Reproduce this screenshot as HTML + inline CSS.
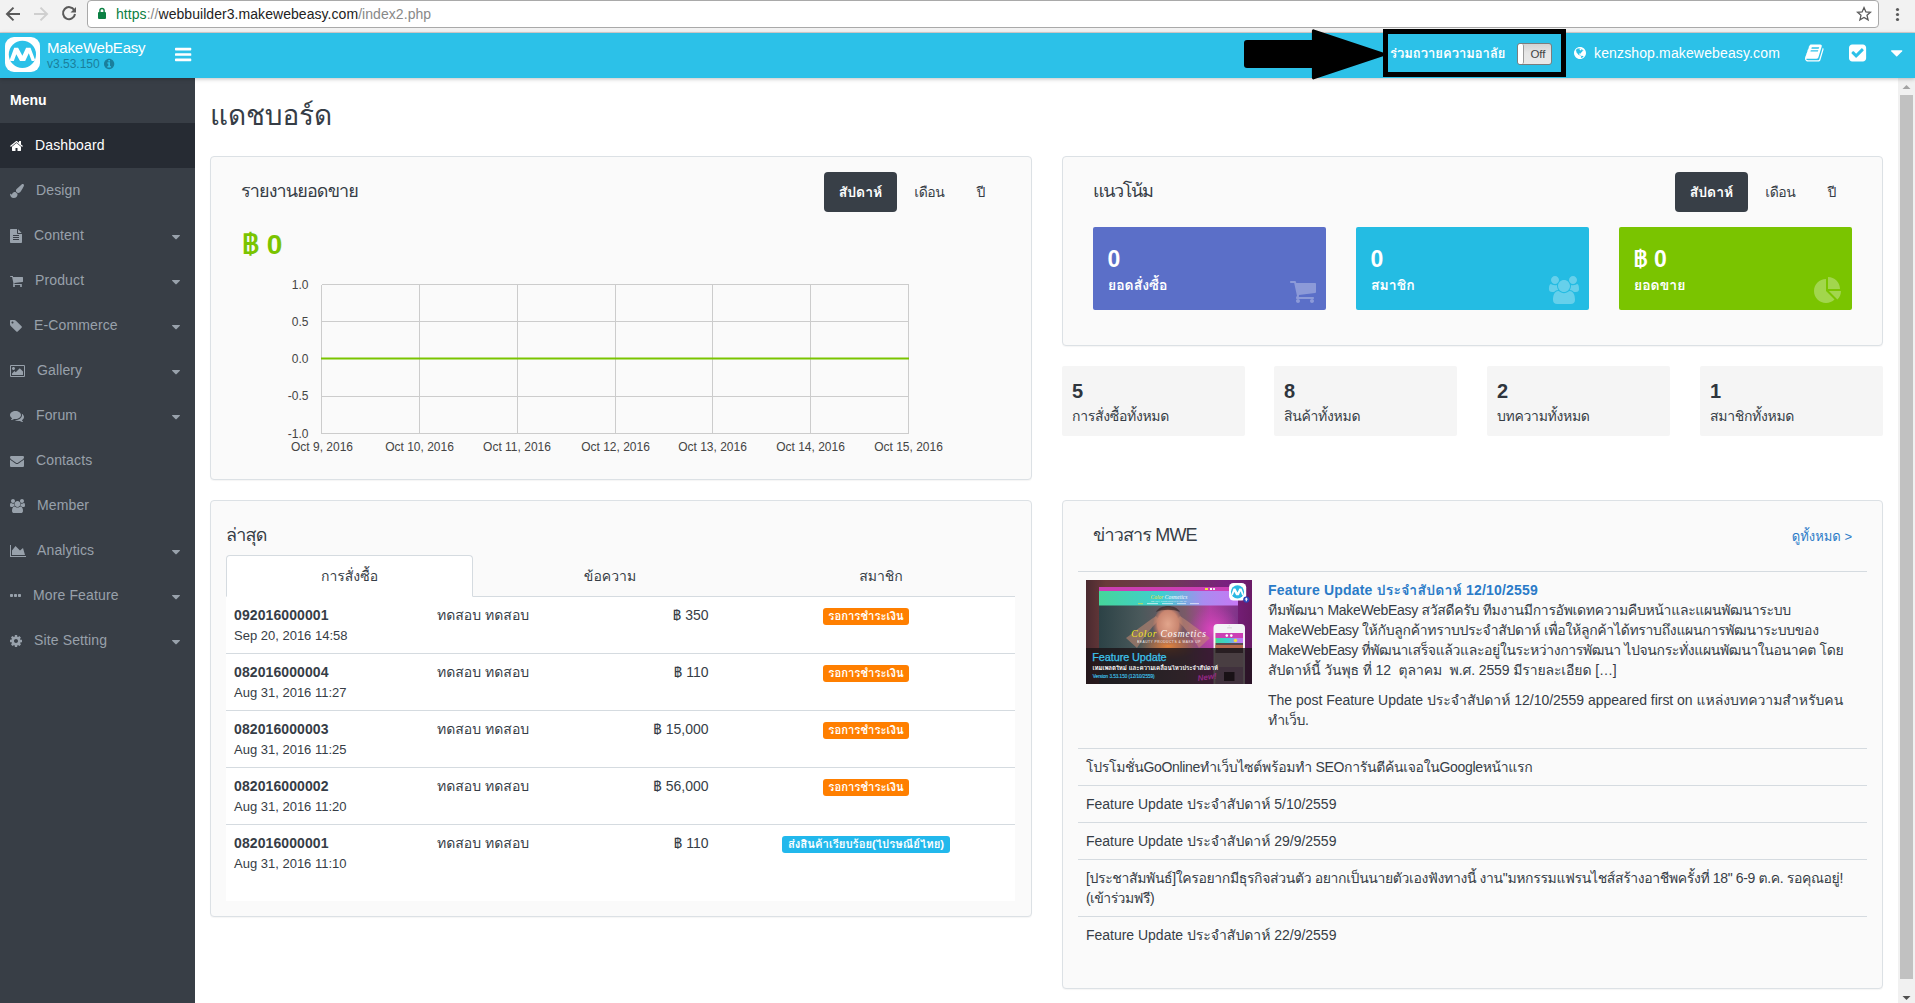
<!DOCTYPE html>
<html lang="th"><head><meta charset="utf-8"><title>MakeWebEasy</title>
<style>
*{box-sizing:border-box}
html,body{margin:0;padding:0}
body{width:1915px;height:1003px;overflow:hidden;position:relative;background:#fff;font-family:"Liberation Sans","Loma","Noto Sans Thai","DejaVu Sans",sans-serif;font-size:14px;line-height:20px;color:#363d46}
.fa{fill:currentColor;display:inline-block;vertical-align:middle;overflow:visible}
.abs{position:absolute}
/* browser chrome */
#chrome{position:absolute;left:0;top:0;width:1915px;height:33px;background:#f2f2f2;border-bottom:1px solid #d9d2d2}
#urlbar{position:absolute;left:87px;top:0;width:1792px;height:28px;background:#fff;border:1px solid #a9a9a9;border-radius:4px}
#url{position:absolute;left:116px;top:4px;font-size:14px;line-height:20px;color:#222;white-space:nowrap;letter-spacing:.055px}
#url .g{color:#0b8043}#url .s{color:#888}
/* header */
#hdr{position:absolute;left:0;top:33px;width:1915px;height:45px;background:#2cc1e8;box-shadow:0 1px 4px rgba(0,0,0,.25);z-index:5;color:#fff}
#logo{position:absolute;left:5px;top:4px;width:35px;height:35px;background:#fff;border-radius:9px}
#brand{position:absolute;left:47px;top:5.5px;font-size:15px;line-height:18px;color:#fff;white-space:nowrap;letter-spacing:-0.2px}
#ver{position:absolute;left:47px;top:24px;font-size:12px;line-height:14px;color:#1a7f9c;white-space:nowrap}
/* sidebar */
#side{position:absolute;left:0;top:78px;width:195px;height:925px;background:#383e46;color:#98a1ab;z-index:2}
#side .mh{height:45px;line-height:44px;padding-left:10px;color:#fff;font-weight:bold;font-size:14px}
#side .it{height:45px;line-height:45px;position:relative;font-size:14px;letter-spacing:.13px;white-space:nowrap}
#side .it.act{background:#262b33;color:#fff}
#side .it .ic{position:absolute;left:10px;top:0;height:45px;display:flex;align-items:center}
#side .it .tx{position:absolute;top:0}
#side .it .cr{position:absolute;left:172px;top:1px;height:45px;display:flex;align-items:center}
/* scrollbar */
#sb{position:absolute;left:1898px;top:78px;width:17px;height:925px;background:#f1f1f1;z-index:1}
#sb .th{position:absolute;left:2px;top:17px;width:13px;height:884px;background:#c1c1c1}
/* content */
h1{letter-spacing:-.15px;position:absolute;left:210px;top:96px;margin:0;font-size:28px;line-height:40px;font-weight:normal;color:#363d46;white-space:nowrap}
.panel{position:absolute;background:#fafafa;border:1px solid #dce1e5;border-radius:4px;box-shadow:0 1px 1px rgba(0,0,0,.04)}
.ptitle{position:absolute;font-size:18px;line-height:26px;white-space:nowrap;color:#363d46}
.btns span{position:absolute;top:15px;height:40px;line-height:40px;text-align:center;font-size:14px;border-radius:4px;color:#363d46;white-space:nowrap}
.btns span.on{background:#383f47;color:#fff;font-weight:bold}
.big{position:absolute;font-weight:bold;white-space:nowrap}
.tile{position:absolute;top:70px;width:233px;height:83px;border-radius:2px;color:#fff}
.tile .n{position:absolute;left:14.5px;top:19px;font-size:23px;line-height:26px;font-weight:bold;white-space:nowrap}
.tile .l{position:absolute;left:15px;top:48px;font-size:14px;line-height:20px;font-weight:bold;white-space:nowrap}
.tile .i{position:absolute;line-height:0;color:rgba(255,255,255,.3)}
.stat{position:absolute;top:366px;width:182.5px;height:70px;background:#f5f5f5;border-radius:2px}
.stat .n{position:absolute;left:10px;top:13px;font-size:20px;line-height:24px;font-weight:bold;color:#2f353d}
.stat .l{position:absolute;left:10px;top:40px;font-size:14px;line-height:20px;white-space:nowrap;letter-spacing:-.31px}
/* tabs + table */
.tab{position:absolute;top:54px;height:42px;line-height:42px;text-align:center;font-size:14px;border-bottom:1px solid #d5dbe0}
.tab.on{line-height:40px;background:#fff;border:1px solid #d5dbe0;border-bottom-color:#fff;border-radius:4px 4px 0 0}
#orders{position:absolute;left:15px;top:96px;width:789px;height:304px;background:#fff}
.row{position:relative;height:57px;border-top:1px solid #d5dbe0}
.row:first-child{border-top:0;height:56px}
.row>*{position:absolute;white-space:nowrap;line-height:20px}
.row .no{left:8px;top:8px;font-weight:bold;letter-spacing:.1px}
.row .dt{left:8px;top:28.5px;font-size:13px}
.row .nm{left:211px;top:8px}
.row .pr{right:306.5px;top:8px}
.row .bd{left:491px;width:298px;top:8px;text-align:center}
.lb{display:inline-block;height:17px;line-height:17px;padding:0 5.5px;border-radius:3px;color:#fff;font-weight:bold;font-size:11.3px;vertical-align:top;margin-top:3px}
.lb.o{background:#ff7f00}.lb.b{background:#22b8ec}
/* news */
.nrow{position:absolute;left:15px;width:789px;border-top:1px solid #d5dbe0;padding:8px;line-height:20px;white-space:nowrap}
a{color:#2a7bc8;text-decoration:none}

</style></head>
<body>
<div id="chrome">
  <svg class="abs" style="left:0;top:0" width="87" height="29" viewBox="0 0 87 29" fill="none" stroke-linecap="butt" stroke-linejoin="miter">
    <path d="M20 14H7.5M13.5 7.6L7 14l6.5 6.4" stroke="#5a5a5a" stroke-width="2"/>
    <path d="M34 14h12.5M40.5 7.6L47 14l-6.5 6.4" stroke="#cfcfcf" stroke-width="2"/>
    <path d="M74.3 10.2A6 6 0 1 0 75 14" stroke="#5a5a5a" stroke-width="2"/>
    <path d="M76 7v5.5h-5.5z" fill="#5a5a5a" stroke="none"/>
  </svg>
  <div id="urlbar"></div>
  <svg class="abs" style="left:97px;top:7px" width="10" height="13" viewBox="0 0 10 13"><rect x="1" y="5" width="8" height="7" rx="1" fill="#0b8043"/><path d="M2.9 5.5V3.6a2.1 2.1 0 0 1 4.2 0v1.9" fill="none" stroke="#0b8043" stroke-width="1.4"/></svg>
  <div id="url"><span class="g">https</span><span class="s">://</span>webbuilder3.makewebeasy.com<span class="s">/index2.php</span></div>
  <svg class="abs" style="left:1856px;top:6px" width="16" height="16" viewBox="0 0 16 16"><path d="M8 1.6l1.9 4.3 4.6.4-3.5 3 1.1 4.6L8 11.5l-4.1 2.4L5 9.3l-3.5-3 4.6-.4z" fill="none" stroke="#5a5a5a" stroke-width="1.3" stroke-linejoin="miter"/></svg>
  <svg class="abs" style="left:1895px;top:7px" width="5" height="15" viewBox="0 0 5 15" fill="#5a5a5a"><circle cx="2.5" cy="2.5" r="1.6"/><circle cx="2.5" cy="7.5" r="1.6"/><circle cx="2.5" cy="12.5" r="1.6"/></svg>
</div>

<div id="hdr">
  <div id="logo"><svg width="35" height="35" viewBox="0 0 35 35"><defs><clipPath id="lc"><circle cx="17.4" cy="17.4" r="13.6"/></clipPath></defs><circle cx="17.4" cy="17.4" r="13.6" fill="#2cc1e8"/><path clip-path="url(#lc)" d="M4.3 24L9.2 10.8H13.1L17.4 18.8 21.1 10.8H25.5L30.5 24H26.7L23.8 16.3 20.2 24H15L11.3 17.2 8.8 24Z" fill="#fff"/></svg></div>
  <div id="brand">MakeWebEasy</div>
  <div id="ver">v3.53.150<svg class="fa " width="10.29" height="12.00" viewBox="0 0 1536 1792" style="vertical-align:-2px;margin-left:4px"><path d="M1024 1376C1024 1394 1010 1408 992 1408H544C526 1408 512 1394 512 1376V1216C512 1198 526 1184 544 1184H640V864H544C526 864 512 850 512 832V672C512 654 526 640 544 640H864C882 640 896 654 896 672V1184H992C1010 1184 1024 1198 1024 1216V1376ZM896 480C896 498 882 512 864 512H672C654 512 640 498 640 480V320C640 302 654 288 672 288H864C882 288 896 302 896 320V480ZM1536 896C1536 472 1192 128 768 128C344 128 0 472 0 896C0 1320 344 1664 768 1664C1192 1664 1536 1320 1536 896Z"/></svg></div>
  <div class="abs" style="left:174.5px;top:12px;line-height:0"><svg class="fa " width="16.29" height="19.00" viewBox="0 0 1536 1792" style=""><path d="M1536 1344C1536 1309 1507 1280 1472 1280H64C29 1280 0 1309 0 1344V1472C0 1507 29 1536 64 1536H1472C1507 1536 1536 1507 1536 1472ZM1536 832C1536 797 1507 768 1472 768H64C29 768 0 797 0 832V960C0 995 29 1024 64 1024H1472C1507 1024 1536 995 1536 960ZM1536 320C1536 285 1507 256 1472 256H64C29 256 0 285 0 320V448C0 483 29 512 64 512H1472C1507 512 1536 483 1536 448Z"/></svg></div>

  <!-- annotation arrow + box -->
  <svg class="abs" style="left:1240px;top:-6px" width="330" height="58" viewBox="1240 27 330 58">
    <rect x="1244" y="40" width="72" height="28" rx="3" fill="#000"/>
    <path d="M1313.4 30.800L1384 54.400 1313.400 77.900z" fill="#000" stroke="#000" stroke-width="3" stroke-linejoin="round"/>
    <rect x="1385.5" y="31.5" width="178" height="43" fill="none" stroke="#000" stroke-width="5"/>
  </svg>
  <div class="abs" style="left:1390px;top:11px;font-size:13px;line-height:20px;font-weight:bold;white-space:nowrap">ร่วมถวายความอาลัย</div>
  <div class="abs" id="tog" style="left:1517px;top:10px;width:35px;height:22px;border:1px solid #7d7d7d;border-radius:3px;background:linear-gradient(#d3d3d3,#e6e6e6 45%,#e9e9e9);overflow:hidden;font-size:11.5px;line-height:20px;color:#444;text-align:center;padding-left:7px"><span class="abs" style="left:0;top:0;width:6px;height:20px;background:#fff;border-right:1px solid #9a9a9a;border-radius:2px"></span>Off</div>
  <div class="abs" style="left:1574px;top:13px;line-height:0"><svg class="fa " width="12.00" height="14.00" viewBox="0 0 1536 1792" style=""><path d="M768 128C344 128 0 472 0 896C0 1320 344 1664 768 1664C1192 1664 1536 1320 1536 896C1536 472 1192 128 768 128ZM1042 649C1053 642 1071 633 1085 637C1096 640 1105 644 1092 653C1086 657 1077 653 1070 655C1079 657 1092 661 1088 670C1114 685 1080 703 1063 701C1071 702 1046 717 1046 716C1037 721 1025 721 1018 730C1010 741 1021 760 1006 756C1000 769 977 762 967 776C978 788 956 805 945 790C935 794 940 805 930 811C934 817 935 823 928 827C930 826 942 836 945 837C943 842 939 846 934 846C939 859 928 873 919 881C909 889 886 897 883 899C865 916 853 941 885 948C886 948 886 981 887 982C889 994 894 1029 873 1016C863 1011 857 983 854 972C851 960 850 960 842 948C829 963 827 952 816 945C805 939 789 941 783 935C768 946 757 943 754 926C750 934 758 946 757 949C752 959 743 957 735 951C722 941 694 958 679 951C680 951 684 955 687 957C684 969 677 962 671 966C664 971 658 981 652 986C665 1011 651 1035 652 1062C652 1082 665 1117 684 1128C693 1133 723 1135 732 1131C746 1125 744 1114 749 1102C754 1089 760 1083 775 1082C818 1080 785 1115 780 1133C777 1146 776 1161 774 1173C779 1175 784 1174 789 1174C789 1170 792 1165 792 1162C798 1172 818 1175 824 1163C831 1175 845 1184 847 1198C849 1212 862 1227 843 1227C829 1227 845 1255 847 1260C858 1280 876 1288 896 1278C896 1286 893 1308 882 1310C872 1312 853 1291 857 1280C856 1284 853 1287 850 1289C840 1277 823 1271 814 1259C812 1256 785 1215 791 1213C777 1219 749 1209 736 1202C715 1191 712 1162 686 1166C668 1169 663 1176 642 1168C628 1163 616 1153 602 1146C586 1137 558 1128 552 1108C546 1092 548 1073 539 1058C533 1048 515 1028 502 1028C514 1028 491 998 488 995C477 982 437 947 445 927C447 924 425 916 421 915C425 925 426 936 431 945C436 955 442 964 448 974C459 992 474 1014 472 1036C459 1040 463 1021 459 1013C452 1000 433 1000 428 986C430 985 431 985 433 984C434 967 409 953 413 941C399 930 399 909 389 895C380 882 365 876 352 867C347 864 311 818 324 815C304 820 294 773 297 761C297 761 295 761 295 760C299 748 292 686 308 685C297 686 294 659 297 654C299 650 314 665 315 667C321 664 327 656 325 649C322 641 311 634 304 628C301 626 261 600 260 601C264 594 263 587 257 582C238 597 248 568 238 565C234 564 230 561 226 557C284 465 365 388 461 335C467 334 475 334 483 334C501 336 511 351 524 360C526 355 522 347 519 342C522 334 534 332 541 330C550 329 563 327 571 331C565 322 558 314 551 306C550 307 547 309 546 311C535 302 514 314 504 318C496 322 489 327 481 330C476 332 473 332 469 331C499 315 530 301 563 290C569 294 575 301 584 308C578 303 578 326 580 330C591 345 615 335 630 335C629 335 674 341 665 330C672 340 672 355 681 364C690 355 677 345 683 336C685 332 703 327 709 324C716 319 704 312 701 310C691 304 652 301 671 278C678 270 703 274 711 279C722 285 734 296 719 306C726 307 759 316 754 329C757 323 762 314 770 314C779 315 781 336 785 341C799 366 823 316 827 318C809 311 843 302 852 305C859 308 870 332 857 331C868 341 869 363 849 362C835 361 819 342 806 357C797 367 793 382 784 391C770 405 751 404 734 402C741 403 719 426 717 430C711 437 707 445 705 453C703 463 705 474 700 484C717 479 726 510 719 511C740 508 757 508 777 515C791 520 812 526 818 541C822 535 841 538 847 540C859 546 860 559 863 570C867 585 880 610 897 602C900 600 922 590 914 584C906 577 897 559 905 549C913 538 932 535 937 521C945 498 913 501 913 484C913 474 926 471 925 459C925 449 910 429 922 422C932 416 980 426 989 432C998 438 1026 446 1028 455C1026 455 1025 455 1023 455C1031 462 1038 477 1024 481C1033 479 1059 489 1041 495C1047 492 1052 494 1058 490C1065 486 1069 479 1078 484C1080 485 1091 463 1097 464C1106 465 1108 478 1112 484C1116 493 1127 496 1131 505C1138 522 1135 538 1158 544C1165 546 1184 535 1183 550C1187 546 1189 543 1189 542C1190 556 1196 572 1213 570C1213 570 1213 589 1211 592C1205 601 1190 599 1181 604C1178 605 1154 626 1157 629C1144 614 1123 614 1106 618C1088 621 1071 623 1054 630C1046 634 1038 638 1032 645C1029 649 1024 667 1019 668C1029 666 1034 655 1042 649ZM879 1526C878 1521 877 1511 877 1510C876 1494 893 1483 892 1468C881 1465 878 1454 880 1442C882 1425 897 1413 909 1402C921 1391 924 1368 921 1354C916 1330 916 1305 912 1281C913 1287 930 1285 933 1293C937 1286 939 1277 944 1270C948 1264 955 1262 961 1257C971 1251 992 1228 1004 1242C1014 1254 989 1267 1002 1278C1006 1270 1002 1258 1010 1250C1026 1232 1037 1252 1053 1257C1070 1262 1076 1268 1089 1279C1085 1275 1105 1268 1107 1267C1126 1263 1134 1274 1147 1284C1161 1294 1183 1301 1181 1321C1191 1323 1197 1326 1205 1329C1213 1333 1224 1331 1230 1337C1138 1434 1016 1502 879 1526Z"/></svg></div>
  <div class="abs" style="left:1594px;top:10px;font-size:14px;letter-spacing:.14px;line-height:20px;white-space:nowrap">kenzshop.makewebeasy.com</div>
  <div class="abs" style="left:1805px;top:10px;line-height:0"><svg class="fa " width="18.57" height="20.00" viewBox="0 0 1664 1792" style=""><path d="M1639 478C1624 458 1603 444 1580 435C1581 453 1581 473 1575 492L1275 1479C1264 1515 1221 1536 1184 1536H261C206 1536 137 1524 117 1466C109 1444 110 1435 118 1423C127 1411 143 1408 156 1408H1025C1152 1408 1178 1374 1225 1220L1499 314C1513 267 1507 220 1481 184C1456 149 1414 128 1367 128H606C589 128 572 133 555 137L556 134C429 98 421 235 379 297C363 320 339 340 335 359C332 377 342 394 340 411C334 464 294 559 270 592C255 612 233 622 226 645C220 661 230 684 228 705C223 752 188 841 161 887C151 905 132 919 127 938C122 955 132 977 127 996C116 1048 82 1129 52 1179C36 1206 15 1223 11 1247C9 1259 18 1272 17 1288C16 1312 12 1332 10 1352C-4 1390 -4 1434 12 1479C49 1583 158 1664 260 1664H1183C1269 1664 1357 1598 1382 1513L1657 607C1671 561 1664 514 1639 478ZM575 480 596 416C602 398 621 384 638 384H1246C1264 384 1274 398 1268 416L1247 480C1241 498 1222 512 1205 512H597C579 512 569 498 575 480ZM492 736 513 672C519 654 538 640 555 640H1163C1181 640 1191 654 1185 672L1164 736C1158 754 1139 768 1122 768H514C496 768 486 754 492 736Z"/></svg></div>
  <div class="abs" style="left:1848.5px;top:10px;line-height:0"><svg class="fa " width="17.14" height="20.00" viewBox="0 0 1536 1792" style=""><path d="M685 1299C660 1324 620 1324 595 1299L237 941C212 916 212 876 237 851L339 749C364 724 404 724 429 749L640 960L1107 493C1132 468 1172 468 1197 493L1299 595C1324 620 1324 660 1299 685ZM1536 416C1536 257 1407 128 1248 128H288C129 128 0 257 0 416V1376C0 1535 129 1664 288 1664H1248C1407 1664 1536 1535 1536 1376Z"/></svg></div>
  <div class="abs" style="left:1891px;top:10px;line-height:0"><svg class="fa " width="11.43" height="20.00" viewBox="0 0 1024 1792" style=""><path d="M1024 704C1024 669 995 640 960 640H64C29 640 0 669 0 704C0 721 7 737 19 749L467 1197C479 1209 495 1216 512 1216C529 1216 545 1209 557 1197L1005 749C1017 737 1024 721 1024 704Z"/></svg></div>
</div>

<div id="side">
  <div class="mh">Menu</div>
  <div class="it act"><span class="ic"><svg class="fa " width="13.00" height="14.00" viewBox="0 0 1664 1792" style=""><path d="M1408 992C1408 990 1408 988 1407 986L832 512L257 986C257 988 256 990 256 992V1472C256 1507 285 1536 320 1536H704V1152H960V1536H1344C1379 1536 1408 1507 1408 1472ZM1631 923C1642 910 1640 889 1627 878L1408 696V288C1408 270 1394 256 1376 256H1184C1166 256 1152 270 1152 288V483L908 279C866 244 798 244 756 279L37 878C24 889 22 910 33 923L95 997C100 1003 108 1007 116 1008C125 1009 133 1006 140 1001L832 424L1524 1001C1530 1006 1537 1008 1545 1008C1546 1008 1547 1008 1548 1008C1556 1007 1564 1003 1569 997L1631 923Z"/></svg></span><span class="tx" style="left:35px">Dashboard</span></div>
  <div class="it"><span class="ic"><svg class="fa " width="14.00" height="14.00" viewBox="0 0 1792 1792" style=""><path d="M1615 0C1566 0 1520 22 1485 54L847 633C788 687 755 765 755 845C755 1013 893 1157 1062 1157C1147 1157 1219 1123 1280 1066C1405 951 1667 462 1745 314C1769 267 1790 216 1790 163C1790 68 1706 0 1615 0ZM706 1034C481 1044 348 1084 263 1306C254 1329 233 1343 208 1343C166 1343 37 1240 0 1215C0 1522 147 1792 486 1792C772 1792 970 1596 964 1311L963 1240C853 1211 758 1135 706 1034Z"/></svg></span><span class="tx" style="left:36px">Design</span></div>
  <div class="it"><span class="ic"><svg class="fa " width="12.00" height="14.00" viewBox="0 0 1536 1792" style=""><path d="M1468 476 1060 68C1050 58 1038 49 1024 40V512H1496C1487 498 1478 486 1468 476ZM992 640C939 640 896 597 896 544V0H96C43 0 0 43 0 96V1696C0 1749 43 1792 96 1792H1440C1493 1792 1536 1749 1536 1696V640ZM1152 1376C1152 1394 1138 1408 1120 1408H416C398 1408 384 1394 384 1376V1312C384 1294 398 1280 416 1280H1120C1138 1280 1152 1294 1152 1312ZM1152 1120C1152 1138 1138 1152 1120 1152H416C398 1152 384 1138 384 1120V1056C384 1038 398 1024 416 1024H1120C1138 1024 1152 1038 1152 1056ZM1152 864C1152 882 1138 896 1120 896H416C398 896 384 882 384 864V800C384 782 398 768 416 768H1120C1138 768 1152 782 1152 800Z"/></svg></span><span class="tx" style="left:34px">Content</span><span class="cr"><svg class="fa " width="8.00" height="14.00" viewBox="0 0 1024 1792" style=""><path d="M1024 704C1024 669 995 640 960 640H64C29 640 0 669 0 704C0 721 7 737 19 749L467 1197C479 1209 495 1216 512 1216C529 1216 545 1209 557 1197L1005 749C1017 737 1024 721 1024 704Z"/></svg></span></div>
  <div class="it"><span class="ic"><svg class="fa " width="13.00" height="14.00" viewBox="0 0 1664 1792" style=""><path d="M640 1536C640 1466 582 1408 512 1408C442 1408 384 1466 384 1536C384 1606 442 1664 512 1664C582 1664 640 1606 640 1536ZM1536 1536C1536 1466 1478 1408 1408 1408C1338 1408 1280 1466 1280 1536C1280 1606 1338 1664 1408 1664C1478 1664 1536 1606 1536 1536ZM1664 448C1664 413 1635 384 1600 384H399C389 336 387 256 320 256H64C29 256 0 285 0 320C0 355 29 384 64 384H268L445 1207C429 1238 384 1313 384 1344C384 1379 413 1408 448 1408H1472C1507 1408 1536 1379 1536 1344C1536 1309 1507 1280 1472 1280H552C562 1260 576 1239 576 1216C576 1192 568 1169 563 1146L1607 1024C1639 1020 1664 992 1664 960Z"/></svg></span><span class="tx" style="left:35px">Product</span><span class="cr"><svg class="fa " width="8.00" height="14.00" viewBox="0 0 1024 1792" style=""><path d="M1024 704C1024 669 995 640 960 640H64C29 640 0 669 0 704C0 721 7 737 19 749L467 1197C479 1209 495 1216 512 1216C529 1216 545 1209 557 1197L1005 749C1017 737 1024 721 1024 704Z"/></svg></span></div>
  <div class="it"><span class="ic"><svg class="fa " width="12.00" height="14.00" viewBox="0 0 1536 1792" style=""><path d="M448 448C448 519 391 576 320 576C249 576 192 519 192 448C192 377 249 320 320 320C391 320 448 377 448 448ZM1515 1024C1515 990 1501 957 1478 933L763 219C712 168 615 128 544 128H128C58 128 0 186 0 256V672C0 743 40 840 91 890L806 1606C829 1629 862 1643 896 1643C930 1643 963 1629 987 1606L1478 1114C1501 1091 1515 1058 1515 1024Z"/></svg></span><span class="tx" style="left:34px">E-Commerce</span><span class="cr"><svg class="fa " width="8.00" height="14.00" viewBox="0 0 1024 1792" style=""><path d="M1024 704C1024 669 995 640 960 640H64C29 640 0 669 0 704C0 721 7 737 19 749L467 1197C479 1209 495 1216 512 1216C529 1216 545 1209 557 1197L1005 749C1017 737 1024 721 1024 704Z"/></svg></span></div>
  <div class="it"><span class="ic"><svg class="fa " width="15.00" height="14.00" viewBox="0 0 1920 1792" style=""><path d="M640 576C640 470 554 384 448 384C342 384 256 470 256 576C256 682 342 768 448 768C554 768 640 682 640 576ZM1664 960 1248 544 736 1056 576 896 256 1216V1408H1664ZM1760 256C1777 256 1792 271 1792 288V1504C1792 1521 1777 1536 1760 1536H160C143 1536 128 1521 128 1504V288C128 271 143 256 160 256H1760ZM1920 288C1920 200 1848 128 1760 128H160C72 128 0 200 0 288V1504C0 1592 72 1664 160 1664H1760C1848 1664 1920 1592 1920 1504Z"/></svg></span><span class="tx" style="left:37px">Gallery</span><span class="cr"><svg class="fa " width="8.00" height="14.00" viewBox="0 0 1024 1792" style=""><path d="M1024 704C1024 669 995 640 960 640H64C29 640 0 669 0 704C0 721 7 737 19 749L467 1197C479 1209 495 1216 512 1216C529 1216 545 1209 557 1197L1005 749C1017 737 1024 721 1024 704Z"/></svg></span></div>
  <div class="it"><span class="ic"><svg class="fa " width="14.00" height="14.00" viewBox="0 0 1792 1792" style=""><path d="M1408 768C1408 485 1093 256 704 256C315 256 0 485 0 768C0 930 104 1075 266 1169C232 1252 188 1291 149 1335C138 1348 125 1360 129 1379C129 1379 129 1379 129 1379C132 1396 146 1408 161 1408C162 1408 163 1408 164 1408C194 1404 223 1399 250 1392C351 1366 445 1323 528 1264C584 1274 643 1280 704 1280C1093 1280 1408 1051 1408 768ZM1792 1024C1792 857 1682 709 1513 616C1528 665 1536 716 1536 768C1536 947 1444 1112 1277 1234C1122 1346 919 1408 704 1408C675 1408 645 1406 616 1404C741 1486 907 1536 1088 1536C1149 1536 1208 1530 1264 1520C1347 1579 1441 1622 1542 1648C1569 1655 1598 1660 1628 1664C1644 1666 1659 1653 1663 1635C1663 1635 1663 1635 1663 1635C1667 1616 1654 1604 1643 1591C1604 1547 1560 1508 1526 1425C1688 1331 1792 1187 1792 1024Z"/></svg></span><span class="tx" style="left:36px">Forum</span><span class="cr"><svg class="fa " width="8.00" height="14.00" viewBox="0 0 1024 1792" style=""><path d="M1024 704C1024 669 995 640 960 640H64C29 640 0 669 0 704C0 721 7 737 19 749L467 1197C479 1209 495 1216 512 1216C529 1216 545 1209 557 1197L1005 749C1017 737 1024 721 1024 704Z"/></svg></span></div>
  <div class="it"><span class="ic"><svg class="fa " width="14.00" height="14.00" viewBox="0 0 1792 1792" style=""><path d="M1792 710C1762 743 1728 772 1692 797C1525 910 1357 1024 1194 1142C1110 1204 1006 1280 897 1280H896H895C786 1280 682 1204 598 1142C435 1023 267 910 101 797C64 772 30 743 0 710V1504C0 1592 72 1664 160 1664H1632C1720 1664 1792 1592 1792 1504ZM1792 416C1792 328 1719 256 1632 256H160C53 256 0 340 0 438C0 529 101 642 172 690C327 798 484 906 639 1015C704 1060 814 1152 895 1152H896H897C978 1152 1088 1060 1153 1015C1308 906 1465 798 1621 690C1709 629 1792 528 1792 416Z"/></svg></span><span class="tx" style="left:36px">Contacts</span></div>
  <div class="it"><span class="ic"><svg class="fa " width="15.00" height="14.00" viewBox="0 0 1920 1792" style=""><path d="M593 896C541 821 512 731 512 640C512 618 514 596 517 574C474 589 430 597 384 597C249 597 145 512 124 512C-3 512 0 784 0 865C0 976 94 1024 194 1024H328C395 944 489 899 593 896ZM1664 1533C1664 1307 1611 960 1318 960C1284 960 1160 1099 960 1099C760 1099 636 960 602 960C309 960 256 1307 256 1533C256 1695 363 1792 523 1792H1397C1557 1792 1664 1695 1664 1533ZM640 256C640 115 525 0 384 0C243 0 128 115 128 256C128 397 243 512 384 512C525 512 640 397 640 256ZM1344 640C1344 428 1172 256 960 256C748 256 576 428 576 640C576 852 748 1024 960 1024C1172 1024 1344 852 1344 640ZM1920 865C1920 784 1923 512 1796 512C1775 512 1671 597 1536 597C1490 597 1446 589 1403 574C1406 596 1408 618 1408 640C1408 731 1379 821 1327 896C1431 899 1525 944 1592 1024H1726C1826 1024 1920 976 1920 865ZM1792 256C1792 115 1677 0 1536 0C1395 0 1280 115 1280 256C1280 397 1395 512 1536 512C1677 512 1792 397 1792 256Z"/></svg></span><span class="tx" style="left:37px">Member</span></div>
  <div class="it"><span class="ic"><svg class="fa " width="16.00" height="14.00" viewBox="0 0 2048 1792" style=""><path d="M2048 1536H128V128H0V1664H2048ZM1664 512 1280 832 704 256 256 832V1408H1920Z"/></svg></span><span class="tx" style="left:37px">Analytics</span><span class="cr"><svg class="fa " width="8.00" height="14.00" viewBox="0 0 1024 1792" style=""><path d="M1024 704C1024 669 995 640 960 640H64C29 640 0 669 0 704C0 721 7 737 19 749L467 1197C479 1209 495 1216 512 1216C529 1216 545 1209 557 1197L1005 749C1017 737 1024 721 1024 704Z"/></svg></span></div>
  <div class="it"><span class="ic"><svg class="fa " width="11.00" height="14.00" viewBox="0 0 1408 1792" style=""><path d="M384 736C384 683 341 640 288 640H96C43 640 0 683 0 736V928C0 981 43 1024 96 1024H288C341 1024 384 981 384 928ZM896 736C896 683 853 640 800 640H608C555 640 512 683 512 736V928C512 981 555 1024 608 1024H800C853 1024 896 981 896 928ZM1408 736C1408 683 1365 640 1312 640H1120C1067 640 1024 683 1024 736V928C1024 981 1067 1024 1120 1024H1312C1365 1024 1408 981 1408 928Z"/></svg></span><span class="tx" style="left:33px">More Feature</span><span class="cr"><svg class="fa " width="8.00" height="14.00" viewBox="0 0 1024 1792" style=""><path d="M1024 704C1024 669 995 640 960 640H64C29 640 0 669 0 704C0 721 7 737 19 749L467 1197C479 1209 495 1216 512 1216C529 1216 545 1209 557 1197L1005 749C1017 737 1024 721 1024 704Z"/></svg></span></div>
  <div class="it"><span class="ic"><svg class="fa " width="12.00" height="14.00" viewBox="0 0 1536 1792" style=""><path d="M1024 896C1024 1037 909 1152 768 1152C627 1152 512 1037 512 896C512 755 627 640 768 640C909 640 1024 755 1024 896ZM1536 787C1536 770 1524 754 1507 751L1324 723C1314 690 1300 657 1283 625C1317 578 1354 534 1388 488C1393 481 1396 474 1396 465C1396 457 1394 449 1389 443C1347 384 1277 322 1224 273C1217 267 1208 263 1199 263C1190 263 1181 266 1175 272L1033 379C1004 364 974 352 943 342L915 158C913 141 897 128 879 128H657C639 128 625 140 621 156C605 216 599 281 592 342C561 352 530 365 501 380L363 273C355 267 346 263 337 263C303 263 168 409 144 442C139 449 135 456 135 465C135 474 139 482 145 489C182 534 218 579 252 627C236 657 223 687 213 719L27 747C12 750 0 768 0 783V1005C0 1022 12 1038 29 1041L212 1068C222 1102 236 1135 253 1167C219 1214 182 1258 148 1304C143 1311 140 1318 140 1327C140 1335 142 1343 147 1350C189 1408 259 1470 312 1518C319 1525 328 1529 337 1529C346 1529 355 1526 362 1520L503 1413C532 1428 562 1440 593 1450L621 1634C623 1651 639 1664 657 1664H879C897 1664 911 1652 915 1636C931 1576 937 1511 944 1450C975 1440 1006 1427 1035 1412L1173 1520C1181 1525 1190 1529 1199 1529C1233 1529 1368 1382 1392 1350C1398 1343 1401 1336 1401 1327C1401 1318 1397 1309 1391 1302C1354 1257 1318 1213 1284 1164C1300 1135 1312 1105 1323 1073L1508 1045C1524 1042 1536 1024 1536 1009Z"/></svg></span><span class="tx" style="left:34px">Site Setting</span><span class="cr"><svg class="fa " width="8.00" height="14.00" viewBox="0 0 1024 1792" style=""><path d="M1024 704C1024 669 995 640 960 640H64C29 640 0 669 0 704C0 721 7 737 19 749L467 1197C479 1209 495 1216 512 1216C529 1216 545 1209 557 1197L1005 749C1017 737 1024 721 1024 704Z"/></svg></span></div>
</div>

<div id="sb">
  <div class="th"></div>
  <svg class="abs" style="left:4px;top:6px" width="9" height="6" viewBox="0 0 9 6"><path d="M4.5 1L8.5 5H.5z" fill="#a3a3a3"/></svg>
  <svg class="abs" style="left:4px;top:917px" width="9" height="6" viewBox="0 0 9 6"><path d="M.5 1h8L4.5 5z" fill="#505050"/></svg>
</div>

<h1>แดชบอร์ด</h1>

<!-- panel 1: sales chart -->
<div class="panel" style="left:210px;top:156px;width:822px;height:324px">
  <div class="ptitle" style="left:30px;top:21px;letter-spacing:-.88px">รายงานยอดขาย</div>
  <div class="btns"><span class="on" style="right:134px;width:73px">สัปดาห์</span><span style="right:71.6px;width:60px;letter-spacing:-.4px">เดือน</span><span style="right:31px;width:38px">ปี</span></div>
  <div class="big" style="left:31px;top:70px;font-size:28px;line-height:36px;color:#7ac400">฿ 0</div>
  <svg class="abs" style="left:29px;top:113px" width="720" height="200" viewBox="240 270 720 200" font-family="'Liberation Sans',Arial,sans-serif" font-size="12" fill="#444">
    <g stroke="#ccc" stroke-width="1" fill="none" shape-rendering="crispEdges">
      <path d="M321.5 284.5H908.5M321.5 321.5H908.5M321.5 396H908.5M321.5 433.5H908.5"/>
      <path d="M321.5 284.5V433.5M419.5 284.5V433.5M517.5 284.5V433.5M615.5 284.5V433.5M712.5 284.5V433.5M810.5 284.5V433.5M908.5 284.5V433.5"/>
    </g>
    <path d="M321 358.5H909" stroke="#7ac400" stroke-width="2" fill="none"/>
    <g text-anchor="end"><text x="308.5" y="289">1.0</text><text x="308.5" y="326">0.5</text><text x="308.5" y="363">0.0</text><text x="308.5" y="400">-0.5</text><text x="308.5" y="438">-1.0</text></g>
    <g text-anchor="middle"><text x="322" y="451">Oct 9, 2016</text><text x="419.5" y="451">Oct 10, 2016</text><text x="517" y="451">Oct 11, 2016</text><text x="615.5" y="451">Oct 12, 2016</text><text x="712.5" y="451">Oct 13, 2016</text><text x="810.5" y="451">Oct 14, 2016</text><text x="908.5" y="451">Oct 15, 2016</text></g>
  </svg>
</div>

<!-- panel 2: trends -->
<div class="panel" style="left:1062px;top:156px;width:821px;height:190px">
  <div class="ptitle" style="left:30px;top:21px;letter-spacing:-1.4px">แนวโน้ม</div>
  <div class="btns"><span class="on" style="right:134px;width:73px">สัปดาห์</span><span style="right:71.6px;width:60px;letter-spacing:-.4px">เดือน</span><span style="right:31px;width:38px">ปี</span></div>
  <div class="tile" style="left:30px;background:#5b6fc8"><div class="n">0</div><div class="l">ยอดสั่งซื้อ</div><div class="i" style="left:196.5px;top:49.6px"><svg class="fa " width="26.00" height="28.00" viewBox="0 0 1664 1792" style=""><path d="M640 1536C640 1466 582 1408 512 1408C442 1408 384 1466 384 1536C384 1606 442 1664 512 1664C582 1664 640 1606 640 1536ZM1536 1536C1536 1466 1478 1408 1408 1408C1338 1408 1280 1466 1280 1536C1280 1606 1338 1664 1408 1664C1478 1664 1536 1606 1536 1536ZM1664 448C1664 413 1635 384 1600 384H399C389 336 387 256 320 256H64C29 256 0 285 0 320C0 355 29 384 64 384H268L445 1207C429 1238 384 1313 384 1344C384 1379 413 1408 448 1408H1472C1507 1408 1536 1379 1536 1344C1536 1309 1507 1280 1472 1280H552C562 1260 576 1239 576 1216C576 1192 568 1169 563 1146L1607 1024C1639 1020 1664 992 1664 960Z"/></svg></div></div>
  <div class="tile" style="left:293px;background:#24bce3"><div class="n">0</div><div class="l">สมาชิก</div><div class="i" style="left:193px;top:49px"><svg class="fa " width="30.00" height="28.00" viewBox="0 0 1920 1792" style=""><path d="M593 896C541 821 512 731 512 640C512 618 514 596 517 574C474 589 430 597 384 597C249 597 145 512 124 512C-3 512 0 784 0 865C0 976 94 1024 194 1024H328C395 944 489 899 593 896ZM1664 1533C1664 1307 1611 960 1318 960C1284 960 1160 1099 960 1099C760 1099 636 960 602 960C309 960 256 1307 256 1533C256 1695 363 1792 523 1792H1397C1557 1792 1664 1695 1664 1533ZM640 256C640 115 525 0 384 0C243 0 128 115 128 256C128 397 243 512 384 512C525 512 640 397 640 256ZM1344 640C1344 428 1172 256 960 256C748 256 576 428 576 640C576 852 748 1024 960 1024C1172 1024 1344 852 1344 640ZM1920 865C1920 784 1923 512 1796 512C1775 512 1671 597 1536 597C1490 597 1446 589 1403 574C1406 596 1408 618 1408 640C1408 731 1379 821 1327 896C1431 899 1525 944 1592 1024H1726C1826 1024 1920 976 1920 865ZM1792 256C1792 115 1677 0 1536 0C1395 0 1280 115 1280 256C1280 397 1395 512 1536 512C1677 512 1792 397 1792 256Z"/></svg></div></div>
  <div class="tile" style="left:556px;background:#7ac400"><div class="n">฿ 0</div><div class="l">ยอดขาย</div><div class="i" style="left:195px;top:50px"><svg class="fa " width="28.00" height="28.00" viewBox="0 0 1792 1792" style=""><path d="M768 890V128C344 128 0 472 0 896C0 1320 344 1664 768 1664C981 1664 1175 1577 1314 1436ZM955 896 1500 1442C1641 1303 1728 1109 1728 896ZM1664 768C1664 344 1320 0 896 0V768H1664Z"/></svg></div></div>
</div>

<div class="stat" style="left:1062px"><div class="n">5</div><div class="l">การสั่งซื้อทั้งหมด</div></div>
<div class="stat" style="left:1274px"><div class="n">8</div><div class="l">สินค้าทั้งหมด</div></div>
<div class="stat" style="left:1487px"><div class="n">2</div><div class="l">บทความทั้งหมด</div></div>
<div class="stat" style="left:1700px"><div class="n">1</div><div class="l">สมาชิกทั้งหมด</div></div>

<!-- panel 3: latest -->
<div class="panel" style="left:210px;top:500px;width:822px;height:417px">
  <div class="ptitle" style="left:15px;top:21px;letter-spacing:-.78px">ล่าสุด</div>
  <div class="tab on" style="left:15px;width:247px">การสั่งซื้อ</div>
  <div class="tab" style="left:262px;width:274px">ข้อความ</div>
  <div class="tab" style="left:536px;width:268px">สมาชิก</div>
  <div id="orders">
    <div class="row"><span class="no">092016000001</span><span class="dt">Sep 20, 2016 14:58</span><span class="nm">ทดสอบ ทดสอบ</span><span class="pr">฿ 350</span><span class="bd"><span class="lb o">รอการชำระเงิน</span></span></div>
    <div class="row"><span class="no">082016000004</span><span class="dt">Aug 31, 2016 11:27</span><span class="nm">ทดสอบ ทดสอบ</span><span class="pr">฿ 110</span><span class="bd"><span class="lb o">รอการชำระเงิน</span></span></div>
    <div class="row"><span class="no">082016000003</span><span class="dt">Aug 31, 2016 11:25</span><span class="nm">ทดสอบ ทดสอบ</span><span class="pr">฿ 15,000</span><span class="bd"><span class="lb o">รอการชำระเงิน</span></span></div>
    <div class="row"><span class="no">082016000002</span><span class="dt">Aug 31, 2016 11:20</span><span class="nm">ทดสอบ ทดสอบ</span><span class="pr">฿ 56,000</span><span class="bd"><span class="lb o">รอการชำระเงิน</span></span></div>
    <div class="row"><span class="no">082016000001</span><span class="dt">Aug 31, 2016 11:10</span><span class="nm">ทดสอบ ทดสอบ</span><span class="pr">฿ 110</span><span class="bd"><span class="lb b">ส่งสินค้าเรียบร้อย(ไปรษณีย์ไทย)</span></span></div>
  </div>
</div>

<!-- panel 4: news -->
<div class="panel" style="left:1062px;top:500px;width:821px;height:489px">
  <div class="ptitle" style="left:30px;top:21px;letter-spacing:-.86px">ข่าวสาร MWE</div>
  <a class="abs" id="all" style="right:30px;top:26px;white-space:nowrap;font-size:13px;line-height:20px">ดูทั้งหมด &gt;</a>
  <div class="nrow" style="top:70px;height:177px">
    <div class="abs" id="thumb" style="left:8px;top:8px;width:166px;height:104px;overflow:hidden"><svg width="166" height="104" viewBox="0 0 166 104" style="display:block">
<defs>
<linearGradient id="tbg" x1="0" y1="0" x2="1" y2="0"><stop offset="0" stop-color="#4a2a30"/><stop offset=".12" stop-color="#6a3a3a"/><stop offset=".5" stop-color="#6e3a55"/><stop offset=".85" stop-color="#7a2080"/><stop offset="1" stop-color="#6a1a66"/></linearGradient>
<linearGradient id="thd" x1="0" y1="0" x2="1" y2="0"><stop offset="0" stop-color="#46d69a"/><stop offset=".45" stop-color="#3ecfd0"/><stop offset=".75" stop-color="#a98cf0"/><stop offset="1" stop-color="#c678f4"/></linearGradient>
<linearGradient id="thero" x1="0" y1="0" x2="1" y2="0"><stop offset="0" stop-color="#2c4246"/><stop offset=".3" stop-color="#4a595b"/><stop offset=".62" stop-color="#7a5a68"/><stop offset=".8" stop-color="#b03fa2"/><stop offset="1" stop-color="#7e3488"/></linearGradient>
<radialGradient id="tface" cx=".5" cy=".45" r=".5"><stop offset="0" stop-color="#e2a58c"/><stop offset=".7" stop-color="#c98670"/><stop offset="1" stop-color="#a86a5c" stop-opacity=".2"/></radialGradient>
<radialGradient id="tspl" cx=".5" cy=".5" r=".5"><stop offset="0" stop-color="#e046c0"/><stop offset="1" stop-color="#c040b0" stop-opacity="0"/></radialGradient>
<radialGradient id="tora" cx=".5" cy=".5" r=".5"><stop offset="0" stop-color="#f08a3a"/><stop offset="1" stop-color="#e07030" stop-opacity="0"/></radialGradient>
<clipPath id="tcl"><circle cx="151.5" cy="11.8" r="6.6"/></clipPath>
</defs>
<rect width="166" height="104" fill="url(#tbg)"/>
<rect x="13" y="7" width="139" height="97" fill="url(#thero)"/>
<ellipse cx="128" cy="50" rx="26" ry="24" fill="url(#tspl)"/>
<ellipse cx="82" cy="66" rx="30" ry="14" fill="url(#tora)" opacity=".9"/>
<ellipse cx="82" cy="46" rx="15" ry="19" fill="url(#tface)"/>
<path d="M40 58c8-6 18-14 30-22l3 4c-8 8-16 18-22 28zM124 58c-8-6-18-14-30-22l-3 4c8 8 16 18 22 28z" fill="#c98a72" opacity=".55"/>
<path d="M70 32c4-8 20-8 24 0-6-3-18-3-24 0z" fill="#3a2a2a" opacity=".7"/>
<rect x="13" y="7" width="139" height="4" fill="#cc3fb4"/>
<rect x="13" y="11" width="139" height="14.500" fill="url(#thd)"/>
<rect x="119" y="8" width="3" height="2" fill="#f0e040"/><rect x="124" y="8" width="2" height="2" fill="#fff"/><rect x="127" y="8" width="2" height="2" fill="#e8e8e8"/>
<text x="83" y="18.500" text-anchor="middle" font-family="'Liberation Serif',serif" font-style="italic" font-size="5.500"><tspan fill="#f2e23a">Color </tspan><tspan fill="#fff">Cosmetics</tspan></text>
<text x="83" y="21.800" text-anchor="middle" font-family="'Liberation Sans',sans-serif" font-size="1.800" fill="#fff" opacity=".85" letter-spacing=".3">BEAUTY PRODUCTS &amp; MAKE UP</text>
<g fill="#fff" opacity=".8"><rect x="52" y="23.300" width="5" height=".9" fill="#f2e23a"/><rect x="61" y="23.300" width="11" height=".8"/><rect x="76" y="23.300" width="11" height=".8"/><rect x="91" y="23.300" width="9" height=".8"/><rect x="104" y="23.300" width="9" height=".8"/></g>
<text x="83" y="56.500" text-anchor="middle" font-family="'Liberation Serif',serif" font-style="italic" font-size="9.500" letter-spacing=".8"><tspan fill="#f5e81e">Color </tspan><tspan fill="#fff">Cosmetics</tspan></text>
<text x="83" y="63.300" text-anchor="middle" font-family="'Liberation Sans',sans-serif" font-size="3.300" fill="#fff" opacity=".9" letter-spacing=".5">BEAUTY PRODUCTS &amp; MAKE UP</text>
<!-- phone -->
<rect x="127.500" y="44" width="31.500" height="66" rx="4" fill="#f4f4f6"/>
<rect x="129.500" y="53" width="27.500" height="51" fill="#f6e27a"/>
<rect x="129.500" y="53" width="27.500" height="5" fill="#cc3fb4"/>
<circle cx="140.800" cy="55.600" r="1.300" fill="#fff"/><circle cx="145.300" cy="55.600" r="1.300" fill="#fff"/>
<rect x="129.500" y="58" width="27.500" height="5" fill="url(#thd)"/><circle cx="149.500" cy="60.500" r="1.700" fill="#f2e23a"/>
<rect x="129.500" y="63" width="27.500" height="10" fill="#5a4a50"/><rect x="129.500" y="65" width="27.500" height="3" fill="#d07050" opacity=".8"/>
<rect x="129.500" y="73" width="27.500" height="14" fill="#f0d8e0"/><rect x="129.500" y="87" width="27.500" height="17" fill="#c9a0c8"/>
<rect x="138" y="92" width="10.500" height="9" fill="#181018"/>
<rect x="141" y="47.500" width="5" height=".8" rx=".4" fill="#ccc"/><circle cx="143.200" cy="45.800" r=".5" fill="#ccc"/>
<!-- overlay -->
<rect x="0" y="68" width="166" height="36" fill="#1a1216" opacity=".78"/>
<text x="112" y="101" font-family="'Liberation Sans',sans-serif" font-style="italic" font-weight="bold" font-size="8" fill="#a02a90" opacity=".9" transform="rotate(-8 112 101)">New!</text>
<text x="6.300" y="80.900" font-family="'Liberation Sans',sans-serif" font-size="10.900" fill="#3ec3ec" stroke="#3ec3ec" stroke-width=".25" letter-spacing="-.1">Feature Update</text>
<text x="6.500" y="90" font-family="'Loma','Liberation Sans',sans-serif" font-weight="bold" font-size="6.200" fill="#fff" letter-spacing="-.12">เทมเพลตใหม่ และความเคลื่อนไหวประจำสัปดาห์</text>
<text x="6.800" y="97.500" font-family="'Liberation Sans',sans-serif" font-size="4.600" fill="#3ec3ec" stroke="#3ec3ec" stroke-width=".15">Version 3.53.150  (12/10/2559)</text>
<!-- logo badge -->
<rect x="143" y="3" width="17.200" height="17.600" rx="4.500" fill="#fff"/>
<circle cx="151.500" cy="11.800" r="6.600" fill="#2cb8e2"/>
<path clip-path="url(#tcl)" d="M145 15.200l2.500-6.800h1.900l2.100 4.200 1.900-4.200h2.100l2.500 6.800h-1.900l-1.500-4-1.800 4h-2.600l-1.900-3.500-1.400 3.500z" fill="#fff"/>
<circle cx="160.300" cy="19.600" r="3.100" fill="#2a46b8"/>
<path d="M160.300 17.600l1.700 1.900h-1.100v1.800h-1.200v-1.800h-1.100z" fill="#fff"/>
</svg></div>
    <div class="abs" style="left:190px;top:8px">
      <a class="ln" style="letter-spacing:0.19px;font-weight:bold">Feature Update ประจำสัปดาห์ 12/10/2559</a><br>
      <span class="ln" style="letter-spacing:-0.315px">ทีมพัฒนา MakeWebEasy สวัสดีครับ ทีมงานมีการอัพเดทความคืบหน้าและแผนพัฒนาระบบ</span><br>
      <span class="ln" style="letter-spacing:-0.31px">MakeWebEasy ให้กับลูกค้าทราบประจำสัปดาห์ เพื่อให้ลูกค้าได้ทราบถึงแผนการพัฒนาระบบของ</span><br>
      <span class="ln" style="letter-spacing:-0.367px">MakeWebEasy ที่พัฒนาเสร็จแล้วและอยู่ในระหว่างการพัฒนา ไปจนกระทั่งแผนพัฒนาในอนาคต โดย</span><br>
      <span class="ln" style="letter-spacing:-0.12px">สัปดาห์นี้ วันพุธ ที่ 12 &nbsp;ตุลาคม &nbsp;พ.ศ. 2559 มีรายละเอียด […]</span>
      <div style="margin-top:10px"><span class="ln" style="letter-spacing:-0.023px">The post Feature Update ประจำสัปดาห์ 12/10/2559 appeared first on แหล่งบทความสำหรับคน</span><br><span class="ln" style="letter-spacing:-0.4px">ทำเว็บ.</span></div>
    </div>
  </div>
  <div class="nrow" style="top:247px;height:37px"><span class="ln" style="letter-spacing:-0.323px">โปรโมชั่นGoOnlineทำเว็บไซต์พร้อมทำ SEOการันตีค้นเจอในGoogleหน้าแรก</span></div>
  <div class="nrow" style="top:284px;height:37px"><span class="ln" style="letter-spacing:-0.016px">Feature Update ประจำสัปดาห์ 5/10/2559</span></div>
  <div class="nrow" style="top:321px;height:37px"><span class="ln" style="letter-spacing:-0.016px">Feature Update ประจำสัปดาห์ 29/9/2559</span></div>
  <div class="nrow" style="top:358px;height:57px"><span class="ln" style="letter-spacing:-0.365px">[ประชาสัมพันธ์]ใครอยากมีธุรกิจส่วนตัว อยากเป็นนายตัวเองฟังทางนี้ งาน"มหกรรมแฟรนไชส์สร้างอาชีพครั้งที่ 18" 6-9 ต.ค. รอคุณอยู่!</span><br><span class="ln" style="letter-spacing:-0.56px">(เข้าร่วมฟรี)</span></div>
  <div class="nrow" style="top:415px;height:37px"><span class="ln" style="letter-spacing:-0.016px">Feature Update ประจำสัปดาห์ 22/9/2559</span></div>
</div>

</body></html>
